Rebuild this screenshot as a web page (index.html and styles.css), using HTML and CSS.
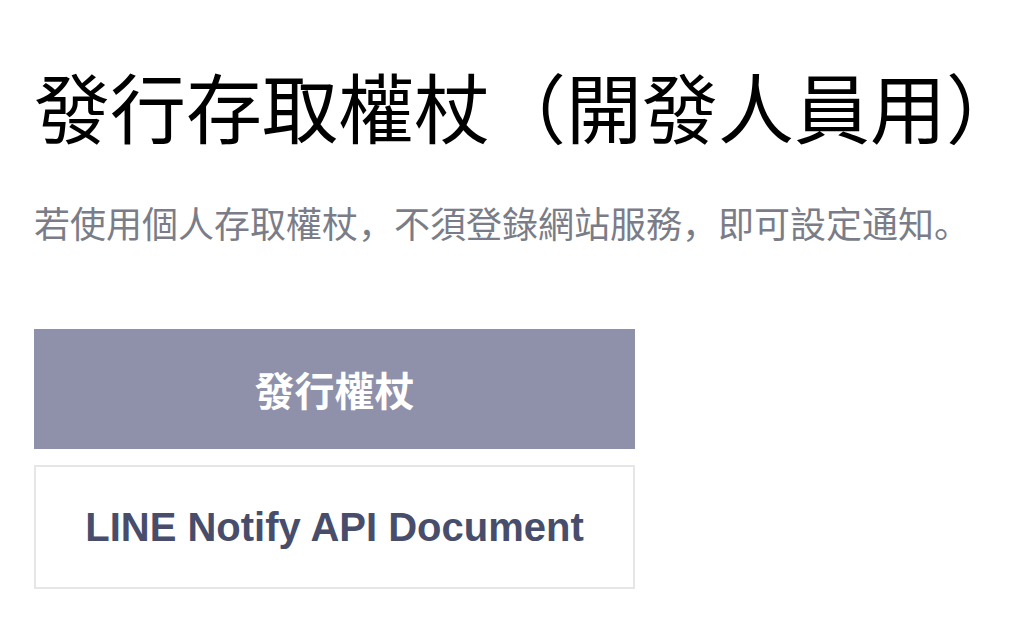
FILE: index.html
```html
<!DOCTYPE html>
<html lang="zh-Hant">
<head>
<meta charset="utf-8">
<title>發行存取權杖（開發人員用）</title>
<link rel="stylesheet" href="styles.css">
</head>
<body>
<main class="page">
  <h1 class="title">發行存取權杖（開發人員用）</h1>
  <p class="desc" lang="zh-Hans">若使用個人存取權杖，不須登錄網站服務，即可設定通知。</p>
  <div class="actions">
    <a class="btn btn-primary" href="#">發行權杖</a>
    <a class="btn btn-secondary" href="#">LINE Notify API Document</a>
  </div>
</main>
</body>
</html>
```

FILE: styles.css
```css
html, body {
  margin: 0;
  padding: 0;
  background: #ffffff;
}
body {
  font-family: "Noto Sans CJK TC", "Noto Sans", sans-serif;
}
.page {
  padding: 0 34px;
}
.title {
  margin: 60px 0 0;
  font-size: 76px;
  line-height: 91px;
  font-weight: 400;
  color: #000000;
  white-space: nowrap;
}
.desc {
  margin: 46px 0 0;
  font-family: "Noto Sans CJK SC", "Noto Sans CJK TC", sans-serif;
  font-size: 36px;
  line-height: 50px;
  color: #7a7d88;
  white-space: nowrap;
}
.actions {
  margin-top: 82px;
  width: 601px;
  display: flex;
  flex-direction: column;
  gap: 16px;
}
.btn {
  display: flex;
  align-items: center;
  justify-content: center;
  box-sizing: border-box;
  text-decoration: none;
  font-weight: 700;
}
.btn-primary {
  height: 120px;
  background: #8f91ab;
  color: #ffffff;
  font-size: 40px;
}
.btn-secondary {
  height: 124px;
  border: 2px solid #e6e6e6;
  background: #ffffff;
  color: #474d6b;
  font-family: "Liberation Sans", Arial, sans-serif;
  font-size: 40px;
}
```
